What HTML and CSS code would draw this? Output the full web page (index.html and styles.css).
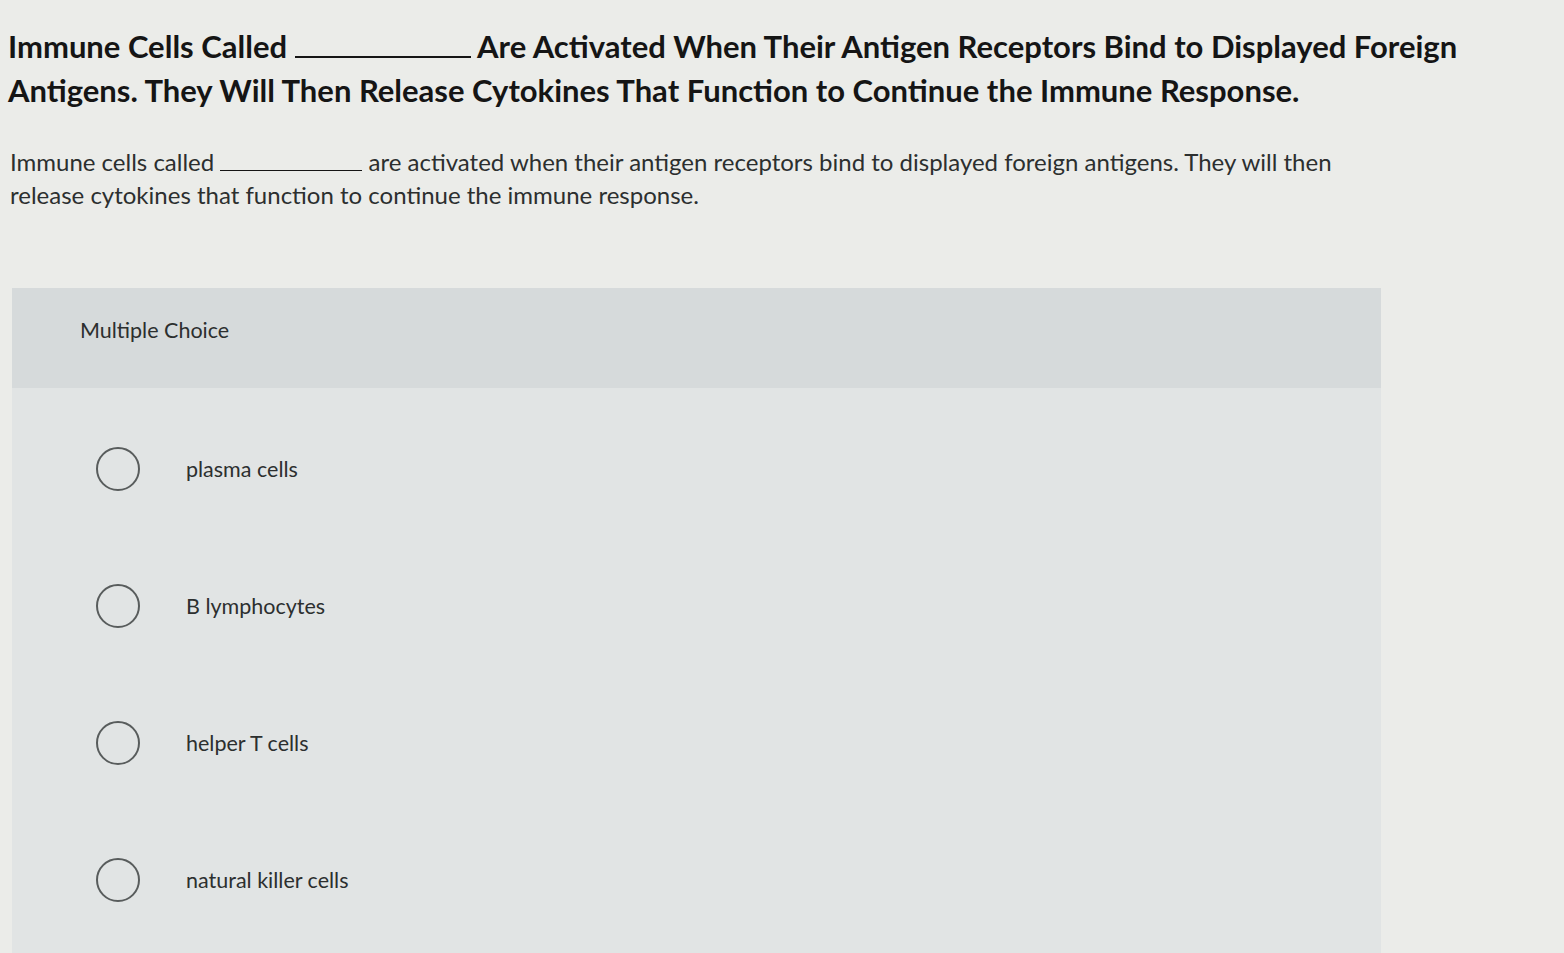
FILE: index.html
```html
<!DOCTYPE html>
<html lang="en">
<head>
    <meta charset="UTF-8">
    <meta name="viewport" content="width=device-width, initial-scale=1.0">
    <title>Immune Cells Called ___</title>
    <link rel="stylesheet" href="styles.css">
</head>
<body>
    <div class="page">
        <h1 class="question-title">
            <span>Immune Cells Called</span>
            <span class="blank blank-title"></span>
            <span>Are Activated When Their Antigen Receptors Bind to Displayed Foreign</span>
            <span>Antigens. They Will Then Release Cytokines That Function to Continue the Immune Response.</span>
        </h1>

        <p class="prompt">
            <span>Immune cells called</span>
            <span class="blank blank-prompt"></span>
            <span>are activated when their antigen receptors bind to displayed foreign antigens. They will then</span>
            <span>release cytokines that function to continue the immune response.</span>
        </p>

        <div class="answer-panel">
            <div class="panel-header">Multiple Choice</div>

            <ul class="choices">
                <li class="choice">
                    <span class="radio"></span>
                    <span class="choice-label">plasma cells</span>
                </li>
                <li class="choice">
                    <span class="radio"></span>
                    <span class="choice-label">B lymphocytes</span>
                </li>
                <li class="choice">
                    <span class="radio"></span>
                    <span class="choice-label">helper T cells</span>
                </li>
                <li class="choice">
                    <span class="radio"></span>
                    <span class="choice-label">natural killer cells</span>
                </li>
            </ul>
        </div>
    </div>
</body>
</html>
```

FILE: styles.css
```css
:root {
    --page-bg: #ebece9;
    --panel-head: #d6dadb;
    --panel-body: #e1e4e4;
    --text-dark: #151515;
    --text-mid: #2c2f2f;
    --radio-line: #585c5c;
}

body {
    margin: 0;
    font-family: Lato, "Open Sans", Arial, sans-serif;
    background-color: var(--page-bg);
    color: var(--text-dark);
}

.page {
    padding: 24px 0 0 8px;
    width: 1480px;
}

.question-title {
    margin: 0;
    font-size: 31px;
    font-weight: 700;
    line-height: 44px;
}

.blank {
    display: inline-block;
    border-bottom: 2px solid var(--text-dark);
    vertical-align: baseline;
}

.blank-title {
    width: 176px;
}

.prompt {
    margin: 33px 0 0 2px;
    width: 1370px;
    font-size: 24px;
    line-height: 33px;
    color: var(--text-mid);
}

.blank-prompt {
    width: 142px;
    border-bottom-width: 1px;
}

.answer-panel {
    margin-top: 77px;
    margin-left: 4px;
    width: 1369px;
    background-color: var(--panel-body);
    padding-bottom: 40px;
}

.panel-header {
    background-color: var(--panel-head);
    height: 100px;
    padding: 29px 0 0 68px;
    box-sizing: border-box;
    font-size: 21.5px;
    color: var(--text-mid);
}

.choices {
    list-style: none;
    margin: 0;
    padding: 12px 0 0 84px;
}

.choice {
    display: flex;
    align-items: center;
    gap: 46px;
    height: 137px;
}

.radio {
    width: 40px;
    height: 40px;
    border: 2px solid var(--radio-line);
    border-radius: 50%;
    flex-shrink: 0;
}

.choice-label {
    font-size: 21.5px;
    color: var(--text-mid);
}
```
